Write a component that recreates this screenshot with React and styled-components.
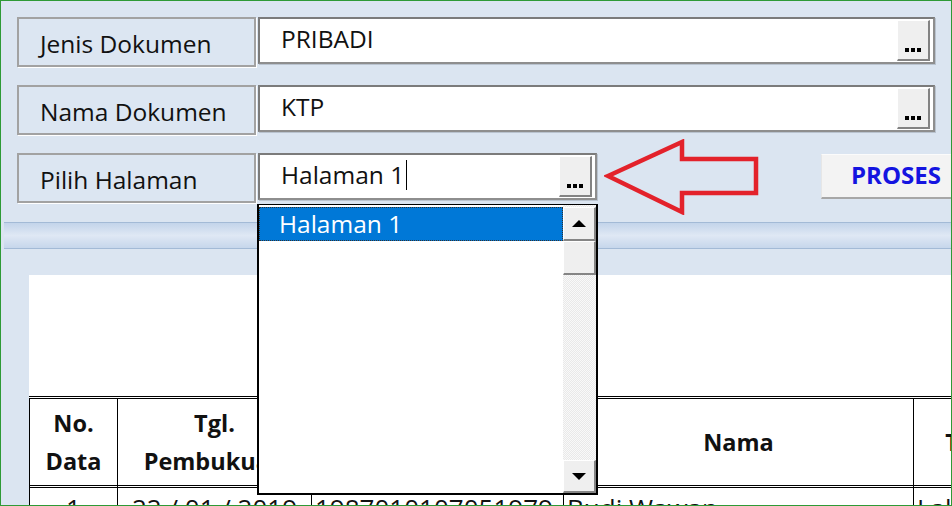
import React from 'react';
import styled, { createGlobalStyle } from 'styled-components';

const GlobalStyle = createGlobalStyle`
  html, body {
    margin: 0;
    padding: 0;
    background: #dbe5f1;
  }
`;

const Window = styled.div`
  position: relative;
  width: 952px;
  height: 506px;
  box-sizing: border-box;
  border: 1px solid #2e9a36;
  background: #dbe5f1;
  overflow: hidden;
  font-family: 'Open Sans', 'Noto Sans', sans-serif;
  color: #111;
`;

const FormArea = styled.div`
  display: flex;
  flex-direction: column;
  gap: 18px;
  padding: 16px 0 0 16px;
`;

const Row = styled.div`
  display: flex;
  align-items: flex-start;
  height: 50px;
  & > * {
    flex: none;
  }
`;

const Label = styled.div`
  box-sizing: border-box;
  width: 239px;
  height: 50px;
  margin-right: 2px;
  display: flex;
  align-items: center;
  padding: 3px 0 0 21px;
  border: 2px solid #a2a2a2;
  box-shadow: 1px 1px 0 #ffffff;
  background: #dce6f2;
  font-size: 24.5px;
  color: #111;
`;

const Field = styled.div`
  box-sizing: border-box;
  width: ${p => p.$width}px;
  height: 47px;
  display: flex;
  align-items: center;
  padding: 0 3px 0 21px;
  background: #fff;
  border: 2px solid #7b7b7b;
  border-right-color: #8e8e8e;
  border-bottom-color: #8e8e8e;
  box-shadow: 1px 1px 0 #b9c3cf;
  font-size: 24.5px;
`;

const FieldText = styled.span`
  flex: 1;
  display: flex;
  align-items: center;
  margin-top: -4px;
`;

const Caret = styled.span`
  display: inline-block;
  width: 1px;
  height: 30px;
  background: #000;
  margin-left: 2px;
`;

const DotsButton = styled.div`
  box-sizing: border-box;
  width: 33px;
  height: 41px;
  display: flex;
  align-items: flex-end;
  justify-content: center;
  gap: 2px;
  padding-bottom: 7px;
  background: #efefef;
  border-top: 1px solid #fff;
  border-left: 1px solid #fff;
  border-right: 2px solid #838383;
  border-bottom: 2px solid #838383;
`;

const Dot = styled.span`
  width: 4px;
  height: 4px;
  background: #000;
`;

const ArrowMark = styled.svg`
  margin: -14px 0 0 7px;
`;

const ProsesButton = styled.div`
  box-sizing: border-box;
  margin-left: 61px;
  margin-top: 1px;
  width: 140px;
  height: 45px;
  display: flex;
  align-items: center;
  padding: 0 0 3px 29px;
  background: #f3f3f3;
  border-top: 1px solid #fbfbfb;
  border-left: 1px solid #e6e6e6;
  border-bottom: 2px solid #a7a7a7;
  font-size: 24px;
  font-weight: 700;
  color: #1414e0;
`;

const Band = styled.div`
  margin: 19px 0 0 3px;
  height: 25px;
  border-top: 1px solid #a3bad6;
  border-bottom: 1px solid #a3bad6;
  background: linear-gradient(#c3d4ea, #dfe8f4 50%, #c6d6eb);
`;

const Sheet = styled.div`
  margin: 26px 0 0 28px;
  height: 240px;
  background: #fff;
  padding-top: 121px;
`;

const Grid = styled.div`
  display: grid;
  grid-template-columns: 88px 194px 252px 350px 220px;
  width: 1104px;
  border-top: 3px double #000;
`;

const HeadCell = styled.div`
  box-sizing: border-box;
  height: 89px;
  display: flex;
  align-items: center;
  justify-content: center;
  text-align: center;
  border-left: 1px solid #000;
  border-bottom: 3px double #000;
  font-size: 23.5px;
  font-weight: 700;
  line-height: 38px;
  color: #111;
  white-space: pre;
`;

const Cell = styled.div`
  box-sizing: border-box;
  height: 40px;
  display: flex;
  align-items: center;
  justify-content: ${p => (p.$center ? 'center' : 'flex-start')};
  padding: 0 ${p => (p.$center ? 0 : 3)}px;
  border-left: 1px solid #000;
  font-size: 26px;
  white-space: nowrap;
  overflow: hidden;
  color: #111;
`;

const DropList = styled.div`
  position: absolute;
  left: 256px;
  top: 203px;
  box-sizing: border-box;
  width: 341px;
  height: 291px;
  display: flex;
  background: #fff;
  border: 2px solid #000;
  border-top-width: 1px;
`;

const Items = styled.div`
  flex: 1;
  padding-top: 2px;
`;

const Item = styled.div`
  box-sizing: border-box;
  height: 34px;
  display: flex;
  align-items: center;
  padding: 0 0 2px 20px;
  font-size: 24.5px;
  background: ${p => (p.$selected ? '#0078d7' : 'transparent')};
  color: ${p => (p.$selected ? '#fff' : '#111')};
  outline: ${p => (p.$selected ? '1px dotted #333' : 'none')};
  outline-offset: -1px;
`;

const ScrollBar = styled.div`
  width: 33px;
  padding-top: 2px;
  display: flex;
  flex-direction: column;
  background-color: #f7f7f7;
  background-image: conic-gradient(#e9e9e9 25%, #f9f9f9 0 50%, #e9e9e9 0 75%, #f9f9f9 0);
  background-size: 2px 2px;
`;

const ScrollButton = styled.div`
  box-sizing: border-box;
  width: 33px;
  height: ${p => p.$h}px;
  display: flex;
  align-items: center;
  justify-content: center;
  background: #efefef;
  border-top: 1px solid #fff;
  border-left: 1px solid #fff;
  border-right: 2px solid #858585;
  border-bottom: 2px solid #858585;
`;

const Track = styled.div`
  flex: 1;
`;

const Triangle = styled.span`
  width: 0;
  height: 0;
  border-left: 7px solid transparent;
  border-right: 7px solid transparent;
  ${p => (p.$up ? 'border-bottom: 7px solid #000;' : 'border-top: 7px solid #000;')}
`;

const Dots = () => (
  <DotsButton>
    <Dot />
    <Dot />
    <Dot />
  </DotsButton>
);

export default function App() {
  return (
    <>
      <GlobalStyle />
      <Window>
        <FormArea>
          <Row>
            <Label>Jenis Dokumen</Label>
            <Field $width={677}>
              <FieldText>PRIBADI</FieldText>
              <Dots />
            </Field>
          </Row>
          <Row>
            <Label>Nama Dokumen</Label>
            <Field $width={677}>
              <FieldText>KTP</FieldText>
              <Dots />
            </Field>
          </Row>
          <Row>
            <Label>Pilih Halaman</Label>
            <Field $width={339}>
              <FieldText>
                Halaman 1<Caret />
              </FieldText>
              <Dots />
            </Field>
            <ArrowMark width="156" height="76" viewBox="0 0 156 76">
              <path
                d="M4 37 L78 3 L78 20 L152 20 L152 54 L78 54 L78 73 Z"
                fill="none"
                stroke="#e3222b"
                strokeWidth="4.5"
                strokeLinejoin="miter"
              />
            </ArrowMark>
            <ProsesButton>PROSES</ProsesButton>
          </Row>
        </FormArea>
        <Band />
        <Sheet>
          <Grid>
            <HeadCell>{'No.\nData'}</HeadCell>
            <HeadCell>{'Tgl.\nPembukuan'}</HeadCell>
            <HeadCell>NIK</HeadCell>
            <HeadCell>Nama</HeadCell>
            <HeadCell>Tempat Lahir</HeadCell>
            <Cell $center>1</Cell>
            <Cell $center>22 / 01 / 2019</Cell>
            <Cell>1987010107051979</Cell>
            <Cell>Budi Wawan</Cell>
            <Cell>Laki-laki</Cell>
          </Grid>
        </Sheet>
        <DropList>
          <Items>
            <Item $selected>Halaman 1</Item>
          </Items>
          <ScrollBar>
            <ScrollButton $h={34}>
              <Triangle $up />
            </ScrollButton>
            <ScrollButton $h={34} />
            <Track />
            <ScrollButton $h={33}>
              <Triangle />
            </ScrollButton>
          </ScrollBar>
        </DropList>
      </Window>
    </>
  );
}
